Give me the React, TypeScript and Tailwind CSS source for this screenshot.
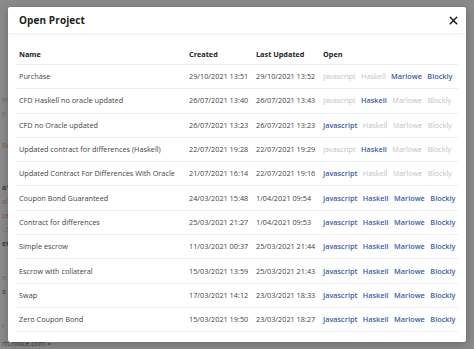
import { X } from "lucide-react";

type Row = {
  name: string;
  created: string;
  updated: string;
  open: [boolean, boolean, boolean, boolean];
};

const ROWS: Row[] = [
  { name: "Purchase", created: "29/10/2021 13:51", updated: "29/10/2021 13:52", open: [false, false, true, true] },
  { name: "CFD Haskell no oracle updated", created: "26/07/2021 13:40", updated: "26/07/2021 13:43", open: [false, true, false, false] },
  { name: "CFD no Oracle updated", created: "26/07/2021 13:23", updated: "26/07/2021 13:23", open: [true, false, false, false] },
  { name: "Updated contract for differences (Haskell)", created: "22/07/2021 19:28", updated: "22/07/2021 19:29", open: [false, true, false, false] },
  { name: "Updated Contract For Differences With Oracle", created: "21/07/2021 16:14", updated: "22/07/2021 19:16", open: [true, false, false, false] },
  { name: "Coupon Bond Guaranteed", created: "24/03/2021 15:48", updated: "1/04/2021 09:54", open: [true, true, true, true] },
  { name: "Contract for differences", created: "25/03/2021 21:27", updated: "1/04/2021 09:53", open: [true, true, true, true] },
  { name: "Simple escrow", created: "11/03/2021 00:37", updated: "25/03/2021 21:44", open: [true, true, true, true] },
  { name: "Escrow with collateral", created: "15/03/2021 13:59", updated: "25/03/2021 21:43", open: [true, true, true, true] },
  { name: "Swap", created: "17/03/2021 14:12", updated: "23/03/2021 18:33", open: [true, true, true, true] },
  { name: "Zero Coupon Bond", created: "15/03/2021 19:50", updated: "23/03/2021 18:27", open: [true, true, true, true] },
];

const LANGS = ["Javascript", "Haskell", "Marlowe", "Blockly"];

export default function App() {
  return (
    <div
      className="relative h-[349px] w-[474px] overflow-hidden bg-[#8b8b8b]"
      style={{ fontFamily: '"Open Sans", "Liberation Sans", sans-serif' }}
    >
      {/* editor behind the overlay */}
      <div className="flex h-full flex-col gap-[6px] pb-[1px] pl-[2px] pt-[96px] text-[7px] leading-[8px]">
        <span className="text-[#6d6d6d]">ers</span>
        <span className="text-[#6d6d6d]">s</span>
        <span className="mt-[18px] text-[#8a5a4a]">Be</span>
        <span className="mt-[28px] font-bold text-[#3a3a3a]">a1</span>
        <span className="text-[#8a4a3a]">o1</span>
        <span className="text-[#8a4a3a]">ce</span>
        <span className="text-[#6d6d6d]">:-5</span>
        <span className="font-bold text-[#3a3a3a]">eC</span>
        <span className="mt-[20px] text-[#5a7a5a]">e</span>
        <span className="text-[#3a3a3a]">a</span>
        <span className="mt-[20px] text-[#5a7a5a]">r</span>
        <span className="mt-auto text-[#3a3a3a]">rtChoice.com  =</span>
      </div>

      {/* modal */}
      <div className="absolute left-[8px] top-[7px] flex h-[335px] w-[458px] flex-col overflow-hidden rounded-[2px] bg-white shadow-[0_2px_10px_rgba(0,0,0,0.25)]">
        <div className="flex h-[26px] shrink-0 items-center justify-between pl-[11px] pr-[6px] shadow-[0_2px_4px_rgba(0,0,0,0.06)]">
          <span className="text-[10px] font-bold tracking-[0.1px] text-[#222]">Open Project</span>
          <X size={13} strokeWidth={2.6} className="text-[#111]" />
        </div>

        <div className="mx-[8px] mt-[11px] flex flex-col text-[7.3px] text-[#444]">
          <div className="grid h-[21px] grid-cols-[170px_67px_67px_1fr] items-center border-b border-[#eeeeee] pl-[3px] font-bold text-[#222]">
            <span>Name</span>
            <span>Created</span>
            <span>Last Updated</span>
            <span>Open</span>
          </div>
          {ROWS.map((row) => (
            <div
              key={row.name}
              className="grid h-[24.3px] grid-cols-[170px_67px_67px_1fr] items-center border-b border-[#eeeeee] pl-[3px]"
            >
              <span className="whitespace-nowrap">{row.name}</span>
              <span className="whitespace-nowrap">{row.created}</span>
              <span className="whitespace-nowrap">{row.updated}</span>
              <span className="flex gap-[5.5px] whitespace-nowrap font-semibold">
                {LANGS.map((lang, i) => (
                  <span
                    key={lang}
                    className={row.open[i] ? "text-[#3d5da8]" : "font-normal text-[#c2c2c2]"}
                  >
                    {lang}
                  </span>
                ))}
              </span>
            </div>
          ))}
        </div>
      </div>
    </div>
  );
}
